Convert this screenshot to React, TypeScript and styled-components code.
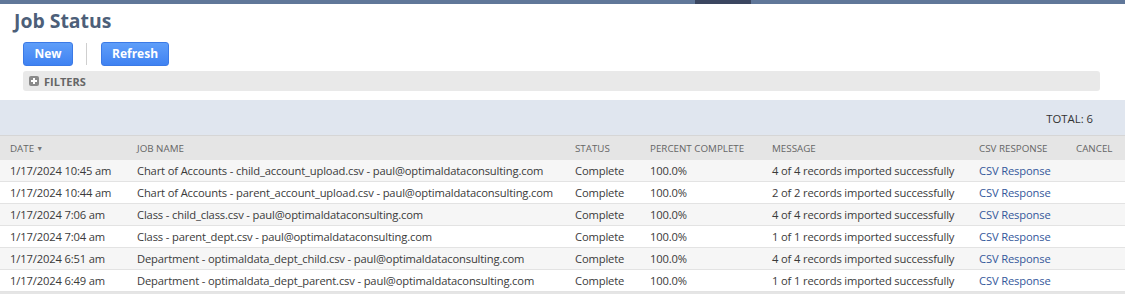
import React from "react";
import styled, { createGlobalStyle } from "styled-components";

const Global = createGlobalStyle`
  html, body { margin: 0; padding: 0; background: #fff; }
  body { font-family: "Open Sans", "Liberation Sans", sans-serif; color: #333; overflow: hidden; }
  * { box-sizing: border-box; }
`;

const Page = styled.div`
  width: 1125px;
  height: 294px;
  display: flex;
  flex-direction: column;
`;

const TopBar = styled.div`
  height: 4px;
  background: #607799;
  display: flex;
  padding-left: 695px;
`;

const TopTab = styled.div`
  width: 56px;
  background: #3b4660;
`;

const Title = styled.h1`
  margin: 0;
  padding: 3px 0 0 14px;
  height: 38px;
  font-size: 19.4px;
  font-weight: 700;
  color: #4d5f79;
  line-height: 28px;
`;

const Toolbar = styled.div`
  display: flex;
  align-items: center;
  padding-left: 23px;
  height: 24px;
`;

const Button = styled.button<{ $w: number }>`
  width: ${(p) => p.$w}px;
  height: 24px;
  padding: 0;
  border: 1px solid #3b7ae6;
  border-radius: 3px;
  background: linear-gradient(#5f9ef9, #3f82f2);
  color: #fff;
  font-family: "Open Sans", "Liberation Sans", sans-serif;
  font-weight: 700;
  font-size: 12px;
  line-height: 22px;
  text-align: center;
  cursor: pointer;
`;

const Sep = styled.div`
  width: 1px;
  height: 22px;
  background: #cfcfcf;
  margin: 0 14px 0 13px;
`;

const Filters = styled.div`
  margin: 5px 25px 0 23px;
  height: 20px;
  background: #e9e9e9;
  border-radius: 3px;
  display: flex;
  align-items: center;
  padding-left: 6px;
  gap: 5px;
  font-size: 11px;
  font-weight: 700;
  color: #666;
`;

const PlusBox = styled.span`
  width: 10px;
  height: 10px;
  border-radius: 2px;
  background: #8a8a8a;
  position: relative;
  display: inline-block;
  &::before, &::after {
    content: "";
    position: absolute;
    background: #fff;
  }
  &::before { left: 2px; right: 2px; top: 4px; height: 2px; }
  &::after { top: 2px; bottom: 2px; left: 4px; width: 2px; }
`;

const TotalBand = styled.div`
  margin-top: 9px;
  height: 35px;
  background: #e0e6ef;
  display: flex;
  align-items: center;
  justify-content: flex-end;
  padding-right: 32px;
  font-size: 11.3px;
  color: #333;
  padding-top: 1px;
`;

const cols = "127px 438px 75px 122px 207px 97px 1fr";

const HeaderRow = styled.div`
  display: grid;
  grid-template-columns: ${cols};
  height: 25px;
  align-items: center;
  padding-left: 10px;
  background: #e5e5e5;
  border-top: 1px solid #d6d6d6;
  font-size: 9.8px;
  color: #666;
  text-transform: uppercase;
`;

const Caret = styled.span`
  font-size: 7px;
  margin-left: 2px;
  color: #777;
  position: relative;
  top: -1px;
`;

const Row = styled.div<{ $alt: boolean }>`
  display: grid;
  grid-template-columns: ${cols};
  height: 22px;
  align-items: center;
  padding-left: 10px;
  background: ${(p) => (p.$alt ? "#f6f6f6" : "#ffffff")};
  border-bottom: 1px solid #e3e3e3;
  font-size: 11.2px;
  letter-spacing: -0.15px;
  color: #3a3a3a;
  white-space: nowrap;
`;

const Link = styled.a`
  color: #34589b;
  text-decoration: none;
`;

const Footer = styled.div`
  flex: 1;
  background: #e5e5e5;
`;

const rows = [
  ["1/17/2024 10:45 am", "Chart of Accounts - child_account_upload.csv - paul@optimaldataconsulting.com", "4 of 4 records imported successfully"],
  ["1/17/2024 10:44 am", "Chart of Accounts - parent_account_upload.csv - paul@optimaldataconsulting.com", "2 of 2 records imported successfully"],
  ["1/17/2024 7:06 am", "Class - child_class.csv - paul@optimaldataconsulting.com", "4 of 4 records imported successfully"],
  ["1/17/2024 7:04 am", "Class - parent_dept.csv - paul@optimaldataconsulting.com", "1 of 1 records imported successfully"],
  ["1/17/2024 6:51 am", "Department - optimaldata_dept_child.csv - paul@optimaldataconsulting.com", "4 of 4 records imported successfully"],
  ["1/17/2024 6:49 am", "Department - optimaldata_dept_parent.csv - paul@optimaldataconsulting.com", "1 of 1 records imported successfully"],
];

export default function App() {
  return (
    <Page>
      <Global />
      <TopBar>
        <TopTab />
      </TopBar>
      <Title>Job Status</Title>
      <Toolbar>
        <Button $w={50}>New</Button>
        <Sep />
        <Button $w={68}>Refresh</Button>
      </Toolbar>
      <Filters>
        <PlusBox />
        FILTERS
      </Filters>
      <TotalBand>TOTAL: 6</TotalBand>
      <HeaderRow>
        <span>
          Date<Caret>▼</Caret>
        </span>
        <span>Job Name</span>
        <span>Status</span>
        <span>Percent Complete</span>
        <span>Message</span>
        <span>CSV Response</span>
        <span>Cancel</span>
      </HeaderRow>
      {rows.map((r, i) => (
        <Row key={i} $alt={i % 2 === 0}>
          <span>{r[0]}</span>
          <span>{r[1]}</span>
          <span>Complete</span>
          <span>100.0%</span>
          <span>{r[2]}</span>
          <Link href="#">CSV Response</Link>
          <span />
        </Row>
      ))}
      <Footer />
    </Page>
  );
}
